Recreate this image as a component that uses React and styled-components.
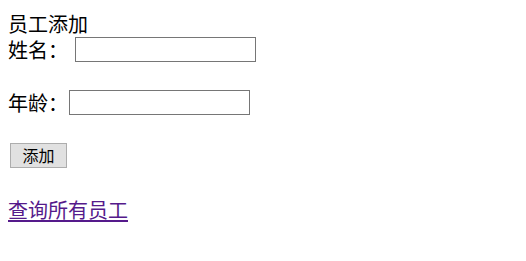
import React from "react";
import styled, { createGlobalStyle } from "styled-components";

const Global = createGlobalStyle`
  html, body { margin: 0; padding: 0; background: #fff; }
  body { font-family: "Noto Sans CJK SC", "Microsoft YaHei", sans-serif; color: #000; }
`;

const Page = styled.div`
  display: flex;
  flex-direction: column;
  align-items: flex-start;
  padding: 11px 0 0 8px;
  font-size: 20px;
`;

const Title = styled.div`
  line-height: 26px;
  height: 26px;
`;

const Row = styled.div`
  display: flex;
  align-items: center;
  height: 25px;
  margin-top: ${(p) => p.$top}px;
  line-height: 25px;
`;

const Label = styled.span`
  white-space: nowrap;
`;

const TextInput = styled.input`
  box-sizing: border-box;
  width: 181px;
  height: 25px;
  margin: 0 0 0 ${(p) => p.$gap}px;
  padding: 0 2px;
  border: 1px solid #767676;
  background: #fff;
  font-size: 14px;
  outline: none;
`;

const Button = styled.button`
  box-sizing: border-box;
  width: 57px;
  height: 25px;
  margin-top: 28px;
  margin-left: 2px;
  padding: 0;
  border: 1px solid #adadad;
  background: #e1e1e1;
  color: #000;
  font-family: "Noto Sans CJK SC", sans-serif;
  font-size: 16px;
  line-height: 23px;
`;

const Link = styled.a`
  margin-top: 29px;
  line-height: 26px;
  color: #551a8b;
  text-decoration: underline;
  text-underline-offset: 2px;
`;

export default function App() {
  return (
    <>
      <Global />
      <Page>
        <Title>员工添加</Title>
        <Row $top={0}>
          <Label>姓名：</Label>
          <TextInput $gap={7} />
        </Row>
        <Row $top={28}>
          <Label>年龄：</Label>
          <TextInput $gap={1} />
        </Row>
        <Button type="button">添加</Button>
        <Link href="#">查询所有员工</Link>
      </Page>
    </>
  );
}
